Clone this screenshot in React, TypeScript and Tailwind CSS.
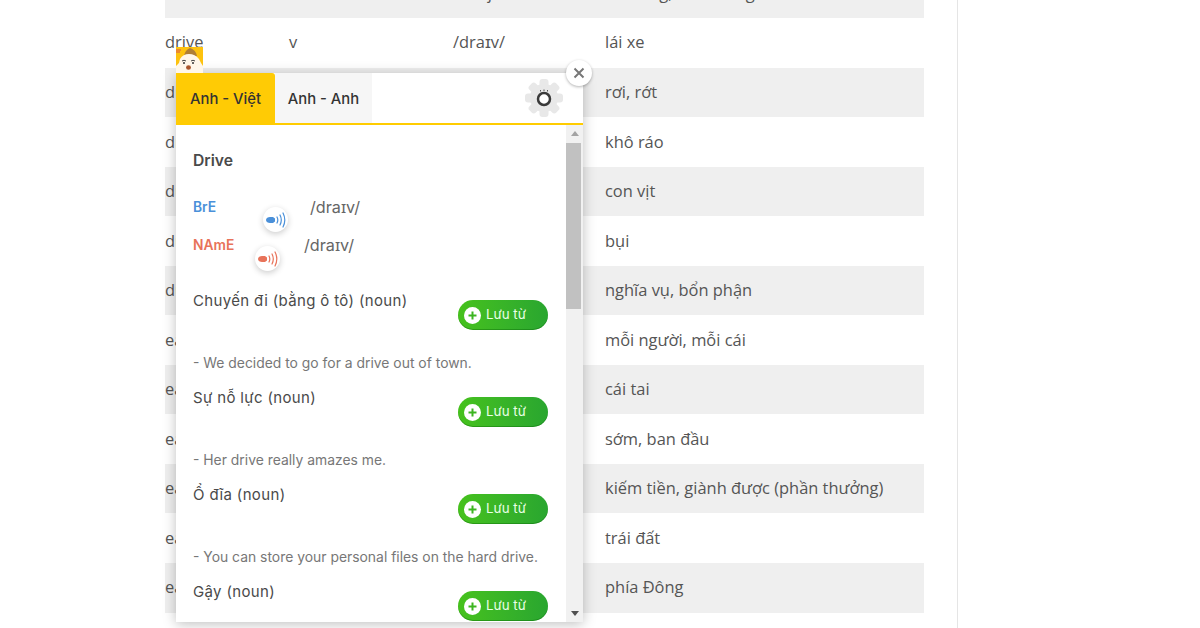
import React from "react";

const rows = [
  ["drink", "v", "/drɪŋk/", "đồ uống, thức uống"],
  ["drive", "v", "/draɪv/", "lái xe"],
  ["drop", "v", "/drɒp/", "rơi, rớt"],
  ["dry", "adj", "/draɪ/", "khô ráo"],
  ["duck", "n", "/dʌk/", "con vịt"],
  ["dust", "n", "/dʌst/", "bụi"],
  ["duty", "n", "/ˈdjuːti/", "nghĩa vụ, bổn phận"],
  ["each", "det", "/iːtʃ/", "mỗi người, mỗi cái"],
  ["ear", "n", "/ɪə/", "cái tai"],
  ["early", "adj", "/ˈɜːli/", "sớm, ban đầu"],
  ["earn", "v", "/ɜːn/", "kiếm tiền, giành được (phần thưởng)"],
  ["earth", "n", "/ɜːθ/", "trái đất"],
  ["east", "n", "/iːst/", "phía Đông"],
  ["easy", "adj", "/ˈiːzi/", ""],
];

const meanings = [
  ["Chuyến đi (bằng ô tô) (noun)", "- We decided to go for a drive out of town."],
  ["Sự nỗ lực (noun)", "- Her drive really amazes me."],
  ["Ổ đĩa (noun)", "- You can store your personal files on the hard drive."],
  ["Gậy (noun)", ""],
];

const SpeakerIcon = ({ color }: { color: string }) => (
  <svg viewBox="0 0 22 16" className="w-[22px] h-4" fill="none">
    <path d="M1 8c0-2 2-3 4-3h3l2 1.500v3L8 11H5C3 11 1 10 1 8z" fill={color} />
    <path d="M12 5q1.600 3 0 6M15 3q2.600 5 0 10M18 1q3.600 7 0 14" stroke={color} strokeWidth="1.2" strokeLinecap="round" />
  </svg>
);

const Gear = () => (
  <svg viewBox="0 0 38 38" className="w-[38px] h-[38px]">
    <g fill="#e8e8e8">
      <circle cx="19" cy="19" r="14" />
      {[0, 45, 90, 135, 180, 225, 270, 315].map((a) => (
        <rect key={a} x="14.5" y="0" width="9" height="10" rx="3" transform={`rotate(${a} 19 19)`} />
      ))}
    </g>
    <circle cx="19" cy="20" r="6" fill="#fff" stroke="#3a3a3a" strokeWidth="2.5" />
    <path d="M15.500 11v1.500M19 10.500v1.500M22.500 11v1.500" stroke="#555" strokeWidth="1" />
  </svg>
);

const Mascot = () => (
  <svg viewBox="0 0 27 26" className="w-[27px] h-[26px] block">
    <rect width="27" height="26" fill="#fdc20e" />
    <path d="M8 9q1-6 6-8q6 2 7 8z" fill="#b07f35" />
    <path d="M0 26v-7l3-3 1-4q3-5 9-5t10 5l2 4 2 3v7z" fill="#fff7ea" />
    <path d="M6 14q2-1.500 4 0M15 14q2-1.500 4 0" stroke="#444" strokeWidth="1" fill="none" />
    <circle cx="8" cy="16" r="1" fill="#333" />
    <circle cx="17" cy="16" r="1" fill="#333" />
    <ellipse cx="12.5" cy="20.5" rx="2.500" ry="2.200" fill="#a9552b" />
    <path d="M0 3h5M0 5h4" stroke="#d9534f" strokeWidth="1" />
  </svg>
);

const SaveButton = () => (
  <button className="flex items-center w-[90px] h-[30px] rounded-full bg-gradient-to-r from-[#46c21c] to-[#29a62f] shadow-[inset_0_-1px_0_rgba(0,90,0,0.35)] text-[#eaffe6] text-[13.3px] pl-[6px] gap-[5px]">
    <span className="w-[17px] h-[17px] rounded-full bg-white flex items-center justify-center">
      <svg viewBox="0 0 11 11" className="w-[11px] h-[11px]">
        <path d="M5.500 1.500v8M1.500 5.500h8" stroke="#3cb521" strokeWidth="2" />
      </svg>
    </span>
    <span>Lưu từ</span>
  </button>
);

const Popup = () => (
  <div className="absolute left-[176px] top-[73px] w-[407px] h-[549px] bg-white shadow-[0_2px_12px_rgba(0,0,0,0.25)] flex flex-col font-['Inter','Noto_Sans',sans-serif] text-[#4a4a4a]">
    <div className="absolute left-0 -top-[26px]"><Mascot /></div>
    <button className="absolute -right-[9px] -top-[13px] z-10 w-[26px] h-[26px] rounded-full bg-white shadow-[0_1px_3px_rgba(0,0,0,0.3)] flex items-center justify-center">
      <svg viewBox="0 0 12 12" className="w-3 h-3">
        <path d="M1.500 1.500l9 9M10.500 1.500l-9 9" stroke="#777" strokeWidth="2" />
      </svg>
    </button>
    <div className="flex h-[52px] shrink-0 border-b-2 border-[#ffcc00] items-stretch">
      <div className="w-[99px] bg-[#ffcb05] rounded-tr-[3px] flex items-center justify-center pt-[2px] text-[14.8px] font-medium text-[#333]">Anh - Việt</div>
      <div className="w-[97px] bg-[#f6f6f6] flex items-center justify-center pt-[2px] text-[14.8px] font-medium text-[#333]">Anh - Anh</div>
      <div className="ml-auto mr-5 self-center"><Gear /></div>
    </div>
    <div className="flex flex-1 min-h-0">
      <div className="flex-1 overflow-hidden pl-[17px] pr-[18px] pt-[26px]">
        <div className="text-[15.7px] font-semibold leading-5">Drive</div>
        <div className="flex mt-[27px] h-[38px] text-[13.8px]">
          <span className="w-[70px] font-semibold text-[#4a90d9] leading-[18px]">BrE</span>
          <span className="w-[25px] h-[25px] mt-[9px] rounded-full bg-white shadow-[0_2px_6px_rgba(0,0,0,0.2)] flex items-center justify-center"><SpeakerIcon color="#4a90d9" /></span>
          <span className="ml-[22px] text-[16.2px] leading-[18px] text-[#666]">/draɪv/</span>
        </div>
        <div className="flex h-[55px] text-[13.8px]">
          <span className="w-[62px] font-semibold text-[#e8735a] leading-[18px]">NAmE</span>
          <span className="w-[25px] h-[25px] mt-[10px] rounded-full bg-white shadow-[0_2px_6px_rgba(0,0,0,0.2)] flex items-center justify-center"><SpeakerIcon color="#e8735a" /></span>
          <span className="ml-6 text-[16.2px] leading-[18px] text-[#666]">/draɪv/</span>
        </div>
        {meanings.map(([title, example]) => (
          <div key={title} className="h-[97px]">
            <div className="flex justify-between">
              <span className="text-[15px] tracking-[0.35px] leading-5">{title}</span>
              <div className="mt-[9px] shrink-0"><SaveButton /></div>
            </div>
            <div className="mt-[23px] text-[13.9px] leading-5 text-[#777]">{example}</div>
          </div>
        ))}
      </div>
      <div className="w-[17px] bg-[#f1f1f1] flex flex-col items-center justify-between py-[6px] relative">
        <div className="w-0 h-0 border-x-[4px] border-x-transparent border-b-[5px] border-b-[#a3a3a3]" />
        <div className="absolute left-0 top-[18px] w-[15px] h-[166px] bg-[#c1c1c1]" />
        <div className="w-0 h-0 border-x-[4px] border-x-transparent border-t-[5px] border-t-[#505050]" />
      </div>
    </div>
  </div>
);

export default function App() {
  return (
    <div className="relative w-[1200px] h-[628px] overflow-hidden bg-white font-['Open_Sans',sans-serif] text-[16.45px] text-[#555]">
      <div className="w-[958px] h-full border-r border-[#e5e5e5] pl-[165px] flow-root">
        <div className="w-[759px] -mt-[31.55px]">
          {rows.map((r, i) => (
            <div key={r[0]} className={`flex items-center h-[49.55px] ${i % 2 === 0 ? "bg-[#efefef]" : "bg-white"}`}>
              <span className="w-[124px]">{r[0]}</span>
              <span className="w-[164px]">{r[1]}</span>
              <span className="w-[152px]">{r[2]}</span>
              <span>{r[3]}</span>
            </div>
          ))}
        </div>
      </div>
      <Popup />
    </div>
  );
}
